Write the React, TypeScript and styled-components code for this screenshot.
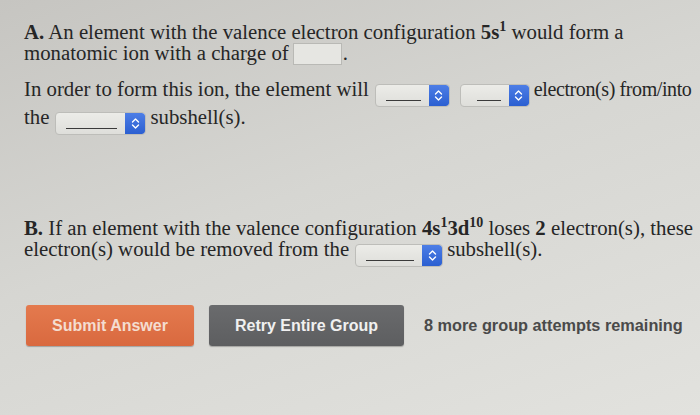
import React from 'react';
import styled, { createGlobalStyle } from 'styled-components';

const GlobalStyle = createGlobalStyle`
  html, body {
    margin: 0;
    padding: 0;
  }
  body {
    width: 700px;
    height: 415px;
    overflow: hidden;
    background: linear-gradient(160deg, #c6c5c1 0%, #d6d6d2 45%, #e2e2de 100%);
  }
`;

const Page = styled.div`
  width: 700px;
  height: 415px;
  box-sizing: border-box;
  padding: 21px 0 0 24px;
  font-family: 'Liberation Serif', 'Times New Roman', serif;
  font-size: 20.8px;
  color: #262626;
`;

const Question = styled.div<{ $gap?: number }>`
  margin-top: ${({ $gap }) => $gap ?? 0}px;
`;

const Line = styled.p<{ $height?: number }>`
  margin: 0;
  height: ${({ $height }) => $height ?? 21}px;
  line-height: ${({ $height }) => $height ?? 21}px;
  white-space: nowrap;
`;

const Tight = styled.span`
  font-size: 20px;
  letter-spacing: -0.4px;
`;

const Sup = styled.sup`
  font-size: 14px;
  font-weight: bold;
  vertical-align: 8px;
  line-height: 0;
`;

const TextInput = styled.span`
  display: inline-block;
  width: 49px;
  height: 22px;
  margin: 0 1px 0 4px;
  vertical-align: -5px;
  background: #e6e6e2;
  border: 1px solid #b9b9b5;
  box-sizing: border-box;
`;

const Select = styled.span<{ $width: number; $blank: number }>`
  display: inline-flex;
  align-items: stretch;
  width: ${({ $width }) => $width}px;
  height: 23px;
  margin: 0 4px 0 6px;
  vertical-align: -5px;
  border: 1px solid #bdbdb9;
  border-radius: 4px;
  box-sizing: border-box;
  background: linear-gradient(#ecece8, #dededa);
  overflow: hidden;

  &::before {
    content: '';
    flex: 1;
    margin: 15px 8px 0 ${({ $blank }) => $blank}px;
    height: 1px;
    background: #3a3a3a;
  }
`;

const Arrows = styled.span`
  width: 20px;
  display: flex;
  align-items: center;
  justify-content: center;
  background: linear-gradient(#4d7ee6, #2b5fd1);
  border-radius: 0 3px 3px 0;
`;

const ButtonRow = styled.div`
  display: flex;
  align-items: center;
  margin-top: 46px;
  margin-left: 2px;
  font-family: 'Liberation Sans', Arial, sans-serif;
  font-weight: bold;
  font-size: 16px;
`;

const Button = styled.div<{ $bg: string; $width: number; $color: string }>`
  width: ${({ $width }) => $width}px;
  height: 41px;
  display: flex;
  align-items: center;
  justify-content: center;
  background: ${({ $bg }) => $bg};
  color: ${({ $color }) => $color};
  border-radius: 3px;
  box-shadow: 0 1px 1px rgba(0, 0, 0, 0.25);
  margin-right: 15px;
`;

const Remaining = styled.span`
  color: #4a4a4a;
  margin-left: 5px;
  font-size: 16.3px;
`;

const Chevrons = () => (
  <svg width="9" height="13" viewBox="0 0 9 13">
    <path d="M1.5 5 L4.5 2 L7.5 5 M1.5 8 L4.5 11 L7.5 8" fill="none" stroke="#fff" strokeWidth="1.4" strokeLinecap="round" strokeLinejoin="round" />
  </svg>
);

const Dropdown = ({ width, blank }: { width: number; blank: number }) => (
  <Select $width={width} $blank={blank}>
    <Arrows>
      <Chevrons />
    </Arrows>
  </Select>
);

export default function App() {
  return (
    <>
      <GlobalStyle />
      <Page>
        <Question>
          <Line>
            <b>A.</b> An element with the valence electron configuration <b>5s</b><Sup>1</Sup> would form a
          </Line>
          <Line>
            monatomic ion with a charge of<TextInput />.
          </Line>
        </Question>
        <Question $gap={12}>
          <Line $height={28}>
            In order to form this ion, the element will
            <Dropdown width={75} blank={10} />
            <Dropdown width={70} blank={16} />
            <Tight>electron(s) from/into</Tight>
          </Line>
          <Line $height={28}>
            the
            <Dropdown width={91} blank={10} />
            subshell(s).
          </Line>
        </Question>
        <Question $gap={86}>
          <Line>
            <b>B.</b> If an element with the valence configuration <b>4s</b><Sup>1</Sup><b>3d</b><Sup>10</Sup> loses <b>2</b> electron(s), these
          </Line>
          <Line>
            electron(s) would be removed from the
            <Dropdown width={88} blank={10} />
            subshell(s).
          </Line>
        </Question>
        <ButtonRow>
          <Button $bg="linear-gradient(#e47a4e, #d9693f)" $width={168} $color="#f4ddd0">Submit Answer</Button>
          <Button $bg="linear-gradient(#6a6b6d, #5d5e60)" $width={195} $color="#f0f0f0">Retry Entire Group</Button>
          <Remaining>8 more group attempts remaining</Remaining>
        </ButtonRow>
      </Page>
    </>
  );
}
